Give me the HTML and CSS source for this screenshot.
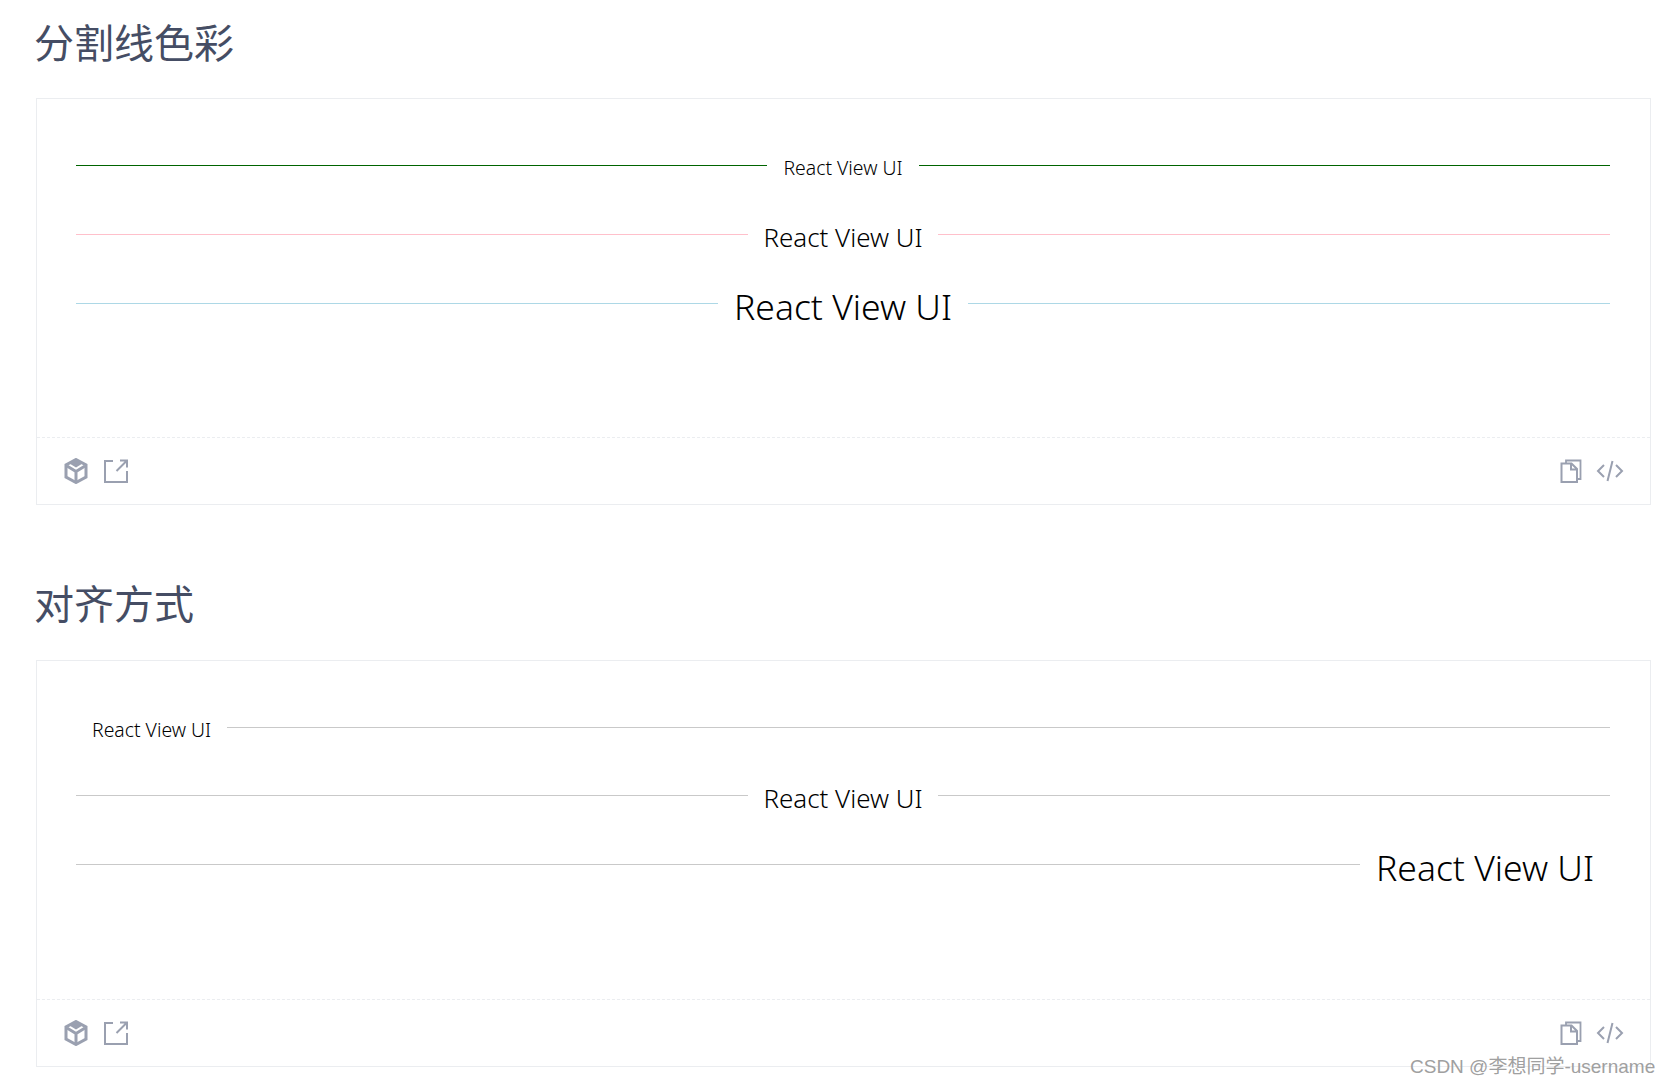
FILE: index.html
```html
<!DOCTYPE html>
<html lang="zh-CN">
<head>
  <meta charset="UTF-8">
  <title>Divider</title>
  <link rel="stylesheet" href="styles.css">
</head>
<body>
  <section class="section">
    <h2 class="title">分割线色彩</h2>
    <div class="card">
      <div class="demo">
        <div class="divider small green"><i class="line"></i><span class="label">React View UI</span><i class="line"></i></div>
        <div class="divider medium pink"><i class="line"></i><span class="label">React View UI</span><i class="line"></i></div>
        <div class="divider large blue"><i class="line"></i><span class="label">React View UI</span><i class="line"></i></div>
      </div>
      <div class="actions">
        <div class="action-group">
          <svg class="icon" width="24" height="26" viewBox="0 0 24 26"><path d="M12 1.5 L22 7 V19 L12 24.5 L2 19 V7 Z" fill="none" stroke-width="3"/><path d="M12 1 L18.5 5.5 L12 9.5 L5.5 5.5 Z" class="solid"/><path d="M3 8 L12 13.5 L21 8 M12 13.5 V23" fill="none" stroke-width="3"/></svg>
          <svg class="icon" width="25" height="24" viewBox="0 0 25 24"><path d="M10 2 H2 V23 H24 V12 M17 1.5 H24 V8.5 M24 1.5 L13.5 12" fill="none" stroke-width="2"/></svg>
        </div>
        <div class="action-group wide">
          <svg class="icon" width="22" height="24" viewBox="0 0 22 24"><path d="M6 4 V1.5 H20.5 V20 H17.5" fill="none" stroke-width="1.8"/><path d="M1.5 4.5 H11.5 L17 10 V23 H1.5 Z M11 4.5 V10.5 H17" fill="none" stroke-width="2"/></svg>
          <svg class="icon" width="28" height="24" viewBox="0 0 28 24"><path d="M8 6 L2 12 L8 18 M20 6 L26 12 L20 18 M16.5 2 L11.5 22" fill="none" stroke-width="2"/></svg>
        </div>
      </div>
    </div>
  </section>
  <section class="section">
    <h2 class="title">对齐方式</h2>
    <div class="card">
      <div class="demo">
        <div class="divider small gray tight"><span class="label">React View UI</span><i class="line"></i></div>
        <div class="divider medium gray"><i class="line"></i><span class="label">React View UI</span><i class="line"></i></div>
        <div class="divider large gray"><i class="line"></i><span class="label">React View UI</span></div>
      </div>
      <div class="actions">
        <div class="action-group">
          <svg class="icon" width="24" height="26" viewBox="0 0 24 26"><path d="M12 1.5 L22 7 V19 L12 24.5 L2 19 V7 Z" fill="none" stroke-width="3"/><path d="M12 1 L18.5 5.5 L12 9.5 L5.5 5.5 Z" class="solid"/><path d="M3 8 L12 13.5 L21 8 M12 13.5 V23" fill="none" stroke-width="3"/></svg>
          <svg class="icon" width="25" height="24" viewBox="0 0 25 24"><path d="M10 2 H2 V23 H24 V12 M17 1.5 H24 V8.5 M24 1.5 L13.5 12" fill="none" stroke-width="2"/></svg>
        </div>
        <div class="action-group wide">
          <svg class="icon" width="22" height="24" viewBox="0 0 22 24"><path d="M6 4 V1.5 H20.5 V20 H17.5" fill="none" stroke-width="1.8"/><path d="M1.5 4.5 H11.5 L17 10 V23 H1.5 Z M11 4.5 V10.5 H17" fill="none" stroke-width="2"/></svg>
          <svg class="icon" width="28" height="24" viewBox="0 0 28 24"><path d="M8 6 L2 12 L8 18 M20 6 L26 12 L20 18 M16.5 2 L11.5 22" fill="none" stroke-width="2"/></svg>
        </div>
      </div>
    </div>
  </section>
  <div class="watermark">CSDN @李想同学-username</div>
</body>
</html>
```

FILE: styles.css
```css
html, body {
  height: 100%;
}

body {
  margin: 0;
  padding: 0 18px 0 36px;
  background: #fff;
  overflow: hidden;
  font-family: "Noto Sans", "Noto Sans CJK SC", sans-serif;
}

.section {
  height: 562px;
}

.title {
  margin: 0 0 0 -2px;
  padding-top: 14px;
  height: 98px;
  box-sizing: border-box;
  font-size: 40px;
  line-height: 54px;
  font-weight: 400;
  color: #454d64;
  font-family: "Noto Sans CJK SC", sans-serif;
}

.section + .section .title {
  padding-top: 13px;
}

.card {
  height: 407px;
  box-sizing: border-box;
  border: 1px solid #ebedf0;
}

.demo {
  height: 339px;
  box-sizing: border-box;
  padding: 66px 40px 0 39px;
  border-bottom: 1px dashed #ebedf0;
}

.divider {
  display: flex;
  align-items: center;
  height: 1px;
  margin-bottom: 68px;
  color: #000;
}

.divider.tight {
  margin-bottom: 67px;
}

.line {
  flex: 1;
  height: 1px;
  background: #c9c9c9;
}

.label {
  padding: 5px 16px 0;
  line-height: 0;
  white-space: nowrap;
  font-weight: 300;
}

.small .label {
  font-size: 19.4px;
}

.medium .label {
  font-size: 25.9px;
}

.large .label {
  font-size: 35.5px;
}

.green .line {
  background: #006400;
}

.pink .line {
  background: #ffc0cb;
}

.blue .line {
  background: #add8e6;
}

.actions {
  display: flex;
  justify-content: space-between;
  align-items: center;
  height: 66px;
  padding: 0 26px 0 27px;
}

.action-group {
  display: flex;
  align-items: center;
  gap: 15px;
}

.action-group.wide {
  gap: 14px;
}

.icon {
  display: block;
  stroke: #9aa0b0;
}

.solid {
  fill: #9aa0b0;
  stroke: none;
}

.watermark {
  position: absolute;
  left: 1410px;
  top: 1055px;
  font-family: "Liberation Sans", "Noto Sans CJK SC", sans-serif;
  font-size: 19px;
  line-height: 24px;
  color: #a0a0a0;
  white-space: nowrap;
}
```
